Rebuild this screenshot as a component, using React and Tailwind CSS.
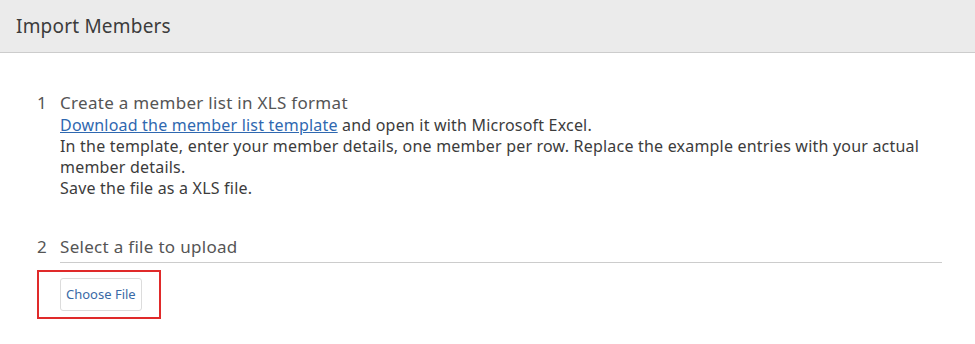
export default function App() {
  return (
    <div className="w-[975px] h-[344px] bg-white text-[#3c3c3c]" style={{ fontFamily: '"Noto Sans", "Open Sans", sans-serif' }}>
      <div className="h-[53px] bg-[#ebebeb] border-b border-[#cccccc] flex items-center px-4">
        <h1 className="text-[19px] tracking-[0.2px] text-[#3c3c3c]">Import Members</h1>
      </div>

      <div className="pl-[37px] pr-[33px] pt-[38px]">
        <div className="flex">
          <div className="w-[23px] text-[17px] leading-[24px] text-[#555]">1</div>
          <div className="flex-1">
            <div className="text-[17px] leading-[24px] tracking-[0.3px] text-[#555]">Create a member list in XLS format</div>
            <div className="text-[16px] leading-[21px] tracking-[0.2px] text-[#3c3c3c]">
              <p>
                <a href="#" className="text-[#2f68b0] underline">Download the member list template</a> and open it with Microsoft Excel.
              </p>
              <p>In the template, enter your member details, one member per row. Replace the example entries with your actual member details.</p>
              <p>Save the file as a XLS file.</p>
            </div>
          </div>
        </div>

        <div className="flex mt-[36px]">
          <div className="w-[23px] text-[17px] leading-[24px] text-[#555]">2</div>
          <div className="flex-1 text-[17px] leading-[24px] tracking-[0.3px] text-[#555] border-b border-[#cccccc] pb-[3px]">Select a file to upload</div>
        </div>

        <div className="mt-[7px] w-[124px] h-[49px] border-2 border-[#e02a2a] flex items-center pl-[21px]">
          <button className="h-[33px] px-[5px] border border-[#dcdcdc] rounded-[3px] bg-white text-[13px] text-[#3a6aa6]">Choose File</button>
        </div>
      </div>
    </div>
  );
}
